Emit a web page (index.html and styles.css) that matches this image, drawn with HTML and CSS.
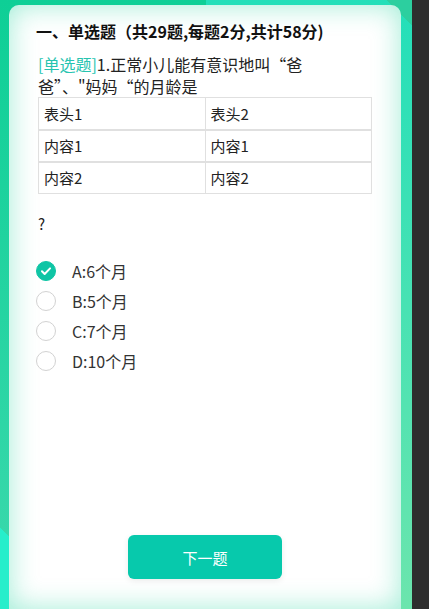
FILE: index.html
```html
<!DOCTYPE html>
<html lang="zh-CN">
<head>
    <meta charset="UTF-8">
    <meta name="viewport" content="width=device-width, initial-scale=1.0">
    <title>单选题</title>
    <link rel="stylesheet" href="styles.css">
</head>
<body>
    <div class="page">
        <div class="card">
            <div class="section-title">一、单选题（共29题,每题2分,共计58分)</div>

            <div class="question">
                <span class="q-type">[单选题]</span><span>1.正常小儿能有意识地叫“爸</span><span>爸”、"妈妈“的月龄是</span>
            </div>
            <table class="q-table">
                <tr><td>表头1</td><td>表头2</td></tr>
                <tr><td>内容1</td><td>内容1</td></tr>
                <tr><td>内容2</td><td>内容2</td></tr>
            </table>
            <p class="q-tail">?</p>

            <div class="options">
                <div class="option checked">
                    <span class="radio">
                        <svg viewBox="0 0 20 20" width="20" height="20"><path d="M5.5 10.3l3 3 6-6.2" fill="none" stroke="#fff" stroke-width="2.2" stroke-linecap="round" stroke-linejoin="round"/></svg>
                    </span>
                    <span class="label">A:6个月</span>
                </div>
                <div class="option">
                    <span class="radio"></span>
                    <span class="label">B:5个月</span>
                </div>
                <div class="option">
                    <span class="radio"></span>
                    <span class="label">C:7个月</span>
                </div>
                <div class="option">
                    <span class="radio"></span>
                    <span class="label">D:10个月</span>
                </div>
            </div>

            <div class="actions">
                <button class="next-button">下一题</button>
            </div>
        </div>
    </div>
    <div class="scrollbar"></div>
</body>
</html>
```

FILE: styles.css
```css
* {
    margin: 0;
    padding: 0;
    box-sizing: border-box;
    font-family: "Noto Sans CJK SC", "Noto Sans", sans-serif;
}

body {
    display: flex;
    height: 100vh;
    overflow: hidden;
    background-color: #2e2e2e;
}

.page {
    flex: 1;
    padding: 5px 11px 0 9px;
    background:
        linear-gradient(45deg, #27eecb 8%, transparent 8%),
        linear-gradient(225deg, #2ccf9f 2.5%, transparent 2.5%),
        linear-gradient(to bottom, #23dfb9, #6ce5ad) right / 50% 100% no-repeat,
        linear-gradient(to bottom, #0ecf96, #3cd9ad) left / 50% 100% no-repeat;
}

.scrollbar {
    width: 17px;
    background-color: #2e2e2e;
}

.card {
    height: 100%;
    background-color: #fff;
    border-radius: 10px 10px 0 0;
    box-shadow: inset 0 0 28px rgba(14, 207, 150, 0.4);
    padding: 14px 29px 0 29px;
}

.section-title {
    font-size: 16px;
    font-weight: bold;
    color: #111;
    line-height: 24px;
    margin-left: -2px;
}

.question {
    width: 282px;
    margin-top: 10px;
    font-size: 16px;
    line-height: 22px;
    color: #222;
}

.q-type {
    color: #27c4b0;
}

.q-table {
    width: 334px;
    border-collapse: collapse;
}

.q-table td {
    width: 50%;
    height: 32px;
    padding: 0 5px;
    border: 1px solid #e0e0e0;
    border-bottom-width: 2px;
    font-size: 15px;
    color: #222;
}

.q-table tr:last-child td {
    border-bottom-width: 1px;
}

.q-tail {
    margin-top: 19px;
    font-size: 15px;
    line-height: 22px;
    color: #222;
}

.options {
    margin-top: 21px;
}

.option {
    display: flex;
    align-items: center;
    height: 30px;
    margin-left: -2px;
}

.radio {
    width: 20px;
    height: 20px;
    border-radius: 50%;
    border: 1px solid #d2d2d2;
    background-color: #fff;
    display: flex;
    align-items: center;
    justify-content: center;
}

.option.checked .radio {
    border-color: #0fc5a5;
    background-color: #0fc5a5;
}

.label {
    margin-left: 16px;
    font-size: 16px;
    color: #333;
}

.actions {
    display: flex;
    justify-content: center;
    margin-top: 159px;
}

.next-button {
    width: 154px;
    height: 44px;
    border: none;
    border-radius: 6px;
    background-color: #07c9ac;
    color: #fff;
    font-size: 15px;
    box-shadow: 0 2px 6px rgba(0, 0, 0, 0.08);
    cursor: pointer;
}
```
